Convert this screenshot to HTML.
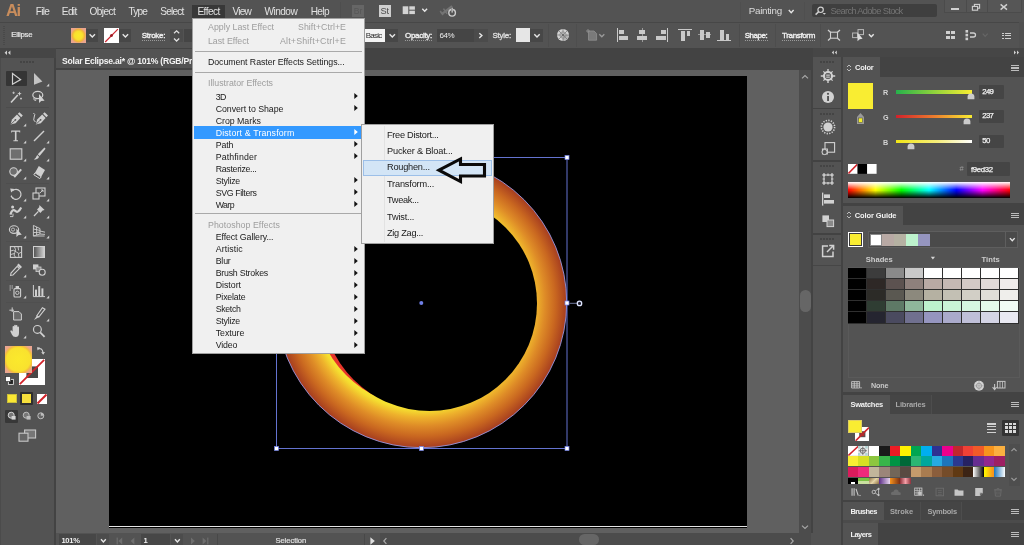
<!DOCTYPE html>
<html lang="en"><head><meta charset="utf-8"><title>Solar Eclipse.ai - Adobe Illustrator</title>
<style>
html,body{margin:0;padding:0;}
body{width:1024px;height:545px;overflow:hidden;background:#535353;position:relative;font-family:"Liberation Sans",sans-serif;}
#app{position:absolute;left:0;top:0;width:1024px;height:545px;overflow:hidden;will-change:transform;-webkit-font-smoothing:antialiased;}
#app div,#app span,#app svg{position:absolute;display:block;box-sizing:border-box;}
#app span{white-space:nowrap;}
</style></head><body><div id="app">
<div style="left:0px;top:0px;width:1024px;height:22px;background:#535353;"></div>
<div style="left:0px;top:22px;width:1024px;height:26px;background:#535353;border-top:1px solid #474747;"></div>
<div style="left:0px;top:48px;width:56px;height:497px;background:#535353;"></div>
<div style="left:0px;top:48px;width:56px;height:9.6px;background:#464646;"></div>
<div style="left:0px;top:57.6px;width:1.2px;height:488px;background:#4b4b4b;"></div>
<div style="left:53.6px;top:57.6px;width:2.2px;height:488px;background:#434343;"></div>
<div style="left:56px;top:48px;width:755px;height:22px;background:#434343;"></div>
<div style="left:55.6px;top:49.2px;width:250px;height:19.2px;background:#535353;"></div>
<div style="left:56px;top:70.3px;width:743px;height:462.7px;background:#606060;"></div>
<div style="left:108.8px;top:76px;width:637.8px;height:451.6px;background:#000;"></div>
<div style="left:108.8px;top:525.9px;width:637.8px;height:1.2px;background:#e4e4e4;"></div>
<div style="left:799px;top:70.3px;width:12px;height:462.7px;background:#4c4c4c;"></div>
<div style="left:811px;top:48px;width:1.8px;height:497px;background:#434343;"></div>
<div style="left:56px;top:533px;width:758px;height:12px;background:#535353;"></div>
<div style="left:812.8px;top:48px;width:211.2px;height:9px;background:#464646;"></div>
<div style="left:812.8px;top:57px;width:28.2px;height:488px;background:#535353;"></div>
<div style="left:841px;top:57px;width:2.4px;height:488px;background:#434343;"></div>
<div style="left:843.4px;top:57px;width:180.6px;height:488px;background:#535353;"></div>
<span style="left:6.0px;top:-0.25px;font-size:16.5px;line-height:20.5px;color:#c98d5c;font-weight:bold;letter-spacing:-1.450px;">Ai</span>
<div style="left:192px;top:4.8px;width:33px;height:13.2px;background:#383838;"></div>
<span style="left:35.7px;top:4.55px;font-size:10.1px;line-height:14.1px;color:#e2e2e2;letter-spacing:-0.668px;">File</span>
<span style="left:61.8px;top:4.55px;font-size:10.1px;line-height:14.1px;color:#e2e2e2;letter-spacing:-0.651px;">Edit</span>
<span style="left:89.4px;top:4.55px;font-size:10.1px;line-height:14.1px;color:#e2e2e2;letter-spacing:-0.565px;">Object</span>
<span style="left:128.5px;top:4.55px;font-size:10.1px;line-height:14.1px;color:#e2e2e2;letter-spacing:-0.799px;">Type</span>
<span style="left:160.3px;top:4.55px;font-size:10.1px;line-height:14.1px;color:#e2e2e2;letter-spacing:-0.795px;">Select</span>
<span style="left:197.4px;top:4.55px;font-size:10.1px;line-height:14.1px;color:#e2e2e2;letter-spacing:-0.540px;">Effect</span>
<span style="left:232.6px;top:4.55px;font-size:10.1px;line-height:14.1px;color:#e2e2e2;letter-spacing:-0.827px;">View</span>
<span style="left:264.5px;top:4.55px;font-size:10.1px;line-height:14.1px;color:#e2e2e2;letter-spacing:-0.537px;">Window</span>
<span style="left:310.7px;top:4.55px;font-size:10.1px;line-height:14.1px;color:#e2e2e2;letter-spacing:-0.618px;">Help</span>
<div style="left:340px;top:2px;width:1px;height:18px;background:#4e4e4e;"></div>
<div style="left:351.9px;top:5.1px;width:11.8px;height:11.8px;background:#666;"></div>
<span style="left:353.8px;top:5.10px;font-size:8.6px;line-height:12.6px;color:#575757;letter-spacing:-0.100px;">Br</span>
<div style="left:378.6px;top:5.1px;width:12px;height:11.8px;background:#cfcfcf;"></div>
<span style="left:380.6px;top:4.80px;font-size:9.2px;line-height:13.2px;color:#4a4a4a;letter-spacing:-0.246px;">St</span>
<svg style="left:402px;top:5px;" width="15" height="11" viewBox="0 0 15 11"><rect x="0.7" y="1.3" width="5.6" height="7.8" fill="#d4d4d4"/><rect x="7.3" y="1.3" width="5.6" height="3.4" fill="#d4d4d4"/><rect x="7.3" y="5.7" width="5.6" height="3.4" fill="#d4d4d4"/></svg>
<svg style="left:418px;top:4px;" width="12" height="12" viewBox="0 0 12 12"><polyline points="4.30,4.70 6.70,7.30 9.10,4.70" fill="none" stroke="#e6e6e6" stroke-width="1.4"/></svg>
<svg style="left:438px;top:2px;" width="20" height="17" viewBox="0 0 20 17"><path d="M2.6 11.4 L13.4 3.2 L15.2 5.6 L5 12.6 Z" fill="#747474"/><path d="M5.4 6.6 L9.2 11.8 M2.2 9 L5 13" stroke="#747474" stroke-width="1.6"/><circle cx="14.1" cy="10.8" r="3.3" fill="#535353" stroke="#cdcdcd" stroke-width="1.4"/><rect x="13.1" y="5.6" width="2" height="5.2" fill="#535353"/><rect x="13.5" y="5.8" width="1.3" height="4.8" fill="#cdcdcd"/></svg>
<div style="left:739.6px;top:2px;width:1px;height:18px;background:#4f4f4f;"></div>
<span style="left:748.8px;top:3.90px;font-size:9.8px;line-height:13.8px;color:#dcdcdc;letter-spacing:-0.302px;">Painting</span>
<svg style="left:785px;top:5px;" width="12" height="12" viewBox="0 0 12 12"><polyline points="3.80,5.00 6.20,7.60 8.60,5.00" fill="none" stroke="#e6e6e6" stroke-width="1.4"/></svg>
<div style="left:804px;top:2px;width:1px;height:18px;background:#4f4f4f;"></div>
<div style="left:812.2px;top:3.9px;width:125px;height:13.4px;background:#3f3f3f;border-radius:2px;"></div>
<svg style="left:814px;top:5px;" width="14" height="12" viewBox="0 0 14 12"><circle cx="6.6" cy="4.8" r="2.7" fill="none" stroke="#d0d0d0" stroke-width="1.2"/><path d="M4.6 6.8 L1.6 9.6" stroke="#d0d0d0" stroke-width="1.5"/><path d="M8.6 8 L12 8 L10.3 9.8 Z" fill="#d0d0d0"/></svg>
<span style="left:830.6px;top:4.55px;font-size:9.3px;line-height:13.3px;color:#747474;letter-spacing:-0.682px;">Search Adobe Stock</span>
<div style="left:944px;top:0px;width:78px;height:13px;background:#565656;border:1px solid #4b4b4b;border-top:none;"></div>
<div style="left:966px;top:0px;width:1px;height:12px;background:#4b4b4b;"></div>
<div style="left:987px;top:0px;width:1px;height:12px;background:#4b4b4b;"></div>
<div style="left:951px;top:8.4px;width:7.6px;height:1.5px;background:#d0d0d0;"></div>
<svg style="left:970px;top:2px;" width="12" height="10" viewBox="0 0 12 10"><rect x="4.4" y="2.4" width="5.2" height="3.8" fill="none" stroke="#d0d0d0" stroke-width="1.1"/><rect x="2.4" y="4.4" width="5.2" height="3.8" fill="#565656" stroke="#d0d0d0" stroke-width="1.1"/></svg>
<svg style="left:998px;top:2px;" width="12" height="10" viewBox="0 0 12 10"><path d="M2.6 2.4 L9 7.6 M9 2.4 L2.6 7.6" stroke="#d0d0d0" stroke-width="1.4"/></svg>
<div style="left:3px;top:26px;width:2px;height:19px;background:repeating-linear-gradient(180deg,#494949 0,#494949 1px,transparent 1px,transparent 2px);"></div>
<span style="left:11.3px;top:29.30px;font-size:7.8px;line-height:11.8px;color:#e6e6e6;letter-spacing:-0.282px;-webkit-text-stroke:0.2px #e6e6e6;">Ellipse</span>
<div style="left:70.9px;top:27.9px;width:14.9px;height:15.2px;background:radial-gradient(circle at 50% 50%,#fbe92c 0,#f9e02e 38%,#f2b43c 58%,#eba58a 72%,#e9a596 100%);"></div>
<div style="left:85.8px;top:29.4px;width:12.5px;height:12.2px;background:#474747;"></div>
<svg style="left:86px;top:29px;" width="12" height="12" viewBox="0 0 12 12"><polyline points="3.60,5.30 6.30,8.10 9.00,5.30" fill="none" stroke="#e6e6e6" stroke-width="1.4"/></svg>
<svg style="left:103.9px;top:27.9px;" width="15.1" height="15.2" viewBox="0 0 15.1 15.2"><rect width="15.1" height="15.2" fill="#fff"/><path d="M1.2 14 L13.9 1.2" stroke="#cc2630" stroke-width="1.2"/><circle cx="7.5" cy="7.6" r="1.5" fill="#9c1c24"/></svg>
<div style="left:119px;top:29.4px;width:12.2px;height:12.2px;background:#474747;"></div>
<svg style="left:119px;top:29px;" width="12" height="12" viewBox="0 0 12 12"><polyline points="3.70,5.30 6.40,8.10 9.10,5.30" fill="none" stroke="#e6e6e6" stroke-width="1.4"/></svg>
<span style="left:141.7px;top:29.90px;font-size:8.0px;line-height:12.0px;color:#f0f0f0;letter-spacing:-0.249px;-webkit-text-stroke:0.35px #f0f0f0;">Stroke:</span>
<div style="left:141.5px;top:39.6px;width:24px;height:1px;background:repeating-linear-gradient(90deg,#9a9a9a 0,#9a9a9a 1px,transparent 1px,transparent 2px);"></div>
<div style="left:170px;top:28.6px;width:13.4px;height:13.6px;background:#4c4c4c;"></div>
<svg style="left:170px;top:28px;" width="14" height="15" viewBox="0 0 14 15"><polyline points="4,5.2 6.6,2.8 9.2,5.2" fill="none" stroke="#e0e0e0" stroke-width="1.3"/><polyline points="4,10.6 6.6,13 9.2,10.6" fill="none" stroke="#e0e0e0" stroke-width="1.3"/></svg>
<div style="left:184px;top:29px;width:60px;height:12.6px;background:#454545;"></div>
<div style="left:340px;top:29px;width:45px;height:13.2px;background:#f4f4f4;"></div>
<span style="left:365.7px;top:29.90px;font-size:8.0px;line-height:12.0px;color:#2a2a2a;letter-spacing:-0.752px;">Basic</span>
<div style="left:385px;top:29.4px;width:13.4px;height:12.2px;background:#474747;"></div>
<svg style="left:386px;top:29px;" width="12" height="12" viewBox="0 0 12 12"><polyline points="3.60,5.30 6.30,8.10 9.00,5.30" fill="none" stroke="#e6e6e6" stroke-width="1.4"/></svg>
<span style="left:405px;top:29.90px;font-size:8.0px;line-height:12.0px;color:#f0f0f0;letter-spacing:-0.293px;-webkit-text-stroke:0.35px #f0f0f0;">Opacity:</span>
<div style="left:405px;top:39.6px;width:27px;height:1px;background:repeating-linear-gradient(90deg,#9a9a9a 0,#9a9a9a 1px,transparent 1px,transparent 2px);"></div>
<div style="left:437.2px;top:29px;width:36.4px;height:12.6px;background:#454545;"></div>
<span style="left:439.6px;top:29.90px;font-size:8.0px;line-height:12.0px;color:#ececec;letter-spacing:-0.470px;">64%</span>
<div style="left:473.6px;top:29px;width:14.2px;height:12.6px;background:#4b4b4b;"></div>
<svg style="left:474px;top:29px;" width="12" height="12" viewBox="0 0 12 12"><polyline points="5.30,4.20 7.90,6.60 5.30,9.00" fill="none" stroke="#e6e6e6" stroke-width="1.4"/></svg>
<span style="left:492.5px;top:29.90px;font-size:8.0px;line-height:12.0px;color:#dcdcdc;letter-spacing:-0.251px;-webkit-text-stroke:0.35px #dcdcdc;">Style:</span>
<div style="left:515.6px;top:28.3px;width:14.6px;height:14.2px;background:#e6e6e6;"></div>
<div style="left:530.2px;top:29.4px;width:12.8px;height:12.2px;background:#474747;"></div>
<svg style="left:531px;top:29px;" width="12" height="12" viewBox="0 0 12 12"><polyline points="3.30,5.30 6.00,8.10 8.70,5.30" fill="none" stroke="#e6e6e6" stroke-width="1.4"/></svg>
<div style="left:548px;top:24px;width:1px;height:23px;background:#4e4e4e;"></div>
<svg style="left:556px;top:28px;" width="14" height="14" viewBox="0 0 14 14"><circle cx="7" cy="7" r="6" fill="#d4d4d4"/><path d="M7 7 L13 7 A6 6 0 0 1 7 13 Z" fill="#b4b4b4"/><path d="M7 1 V13 M1 7 H13 M2.8 2.8 L11.2 11.2 M11.2 2.8 L2.8 11.2" stroke="#6e6e6e" stroke-width="0.7"/><circle cx="7" cy="7" r="3.2" fill="none" stroke="#8a8a8a" stroke-width="0.8"/><circle cx="7" cy="7" r="1" fill="#666"/></svg>
<div style="left:576px;top:24px;width:1px;height:23px;background:#4e4e4e;"></div>
<svg style="left:585px;top:28px;" width="14" height="14" viewBox="0 0 14 14"><path d="M3.5 3 H9 L11.6 5.6 V12.2 H3.5 Z" fill="#7a7a7a" stroke="#909090" stroke-width="0.8"/><path d="M1 3 H5 M3 1 V5" stroke="#909090" stroke-width="0.9"/></svg>
<svg style="left:595px;top:29px;" width="12" height="12" viewBox="0 0 12 12"><polyline points="4.30,5.20 6.80,7.80 9.30,5.20" fill="none" stroke="#9a9a9a" stroke-width="1.3"/></svg>
<div style="left:617.2px;top:28px;width:1.0px;height:13.5px;background:#c9c9c9;"></div>
<div style="left:619px;top:30.2px;width:5px;height:3.8px;background:#c9c9c9;"></div>
<div style="left:619px;top:35.7px;width:9px;height:4.2px;background:#c9c9c9;"></div>
<div style="left:641.6px;top:28px;width:0.9px;height:13.5px;background:#9a9a9a;"></div>
<div style="left:639px;top:30.2px;width:6.3px;height:3.8px;background:#c9c9c9;"></div>
<div style="left:637px;top:35.7px;width:10px;height:4.2px;background:#c9c9c9;"></div>
<div style="left:667px;top:28px;width:1px;height:13.5px;background:#c9c9c9;"></div>
<div style="left:660.8px;top:30.2px;width:5.2px;height:3.8px;background:#c9c9c9;"></div>
<div style="left:656.3px;top:35.7px;width:9.7px;height:4.2px;background:#c9c9c9;"></div>
<div style="left:678px;top:29.2px;width:13.5px;height:1.0px;background:#c9c9c9;"></div>
<div style="left:680.7px;top:30.8px;width:4.3px;height:9.9px;background:#c9c9c9;"></div>
<div style="left:686.5px;top:30.8px;width:3.9px;height:5.7px;background:#c9c9c9;"></div>
<div style="left:697.8px;top:34.4px;width:13.7px;height:0.9px;background:#9a9a9a;"></div>
<div style="left:699.8px;top:29.9px;width:4.2px;height:10.0px;background:#c9c9c9;"></div>
<div style="left:705.6px;top:31.6px;width:4.2px;height:6.6px;background:#c9c9c9;"></div>
<div style="left:717.3px;top:40.2px;width:13.7px;height:1.0px;background:#c9c9c9;"></div>
<div style="left:719.8px;top:29.9px;width:3.8px;height:9.8px;background:#c9c9c9;"></div>
<div style="left:725.6px;top:34px;width:3.8px;height:5.7px;background:#c9c9c9;"></div>
<div style="left:739px;top:24px;width:1px;height:23px;background:#4c4c4c;"></div>
<span style="left:744.7px;top:29.90px;font-size:8.0px;line-height:12.0px;color:#f0f0f0;letter-spacing:-0.476px;-webkit-text-stroke:0.35px #f0f0f0;">Shape:</span>
<div style="left:744.5px;top:39.6px;width:23px;height:1px;background:repeating-linear-gradient(90deg,#9a9a9a 0,#9a9a9a 1px,transparent 1px,transparent 2px);"></div>
<div style="left:775px;top:24px;width:1px;height:23px;background:#4d4d4d;"></div>
<span style="left:782px;top:29.90px;font-size:8.0px;line-height:12.0px;color:#f0f0f0;letter-spacing:-0.350px;-webkit-text-stroke:0.35px #f0f0f0;">Transform</span>
<div style="left:782px;top:39.6px;width:33px;height:1px;background:repeating-linear-gradient(90deg,#9a9a9a 0,#9a9a9a 1px,transparent 1px,transparent 2px);"></div>
<div style="left:820px;top:24px;width:1px;height:23px;background:#4d4d4d;"></div>
<svg style="left:827px;top:29px;" width="14" height="13" viewBox="0 0 14 13"><rect x="3.5" y="3.2" width="7" height="6" fill="none" stroke="#cfcfcf" stroke-width="1.1"/><path d="M1 1 L3.5 3.2 M13 1 L10.5 3.2 M1 11.5 L3.5 9.2 M13 11.5 L10.5 9.2" stroke="#cfcfcf" stroke-width="1.3"/></svg>
<svg style="left:851px;top:28px;" width="15" height="15" viewBox="0 0 15 15"><rect x="7" y="1.6" width="5.5" height="5" fill="none" stroke="#b8b8b8" stroke-width="1"/><rect x="1.6" y="5" width="5" height="4.6" fill="none" stroke="#b8b8b8" stroke-width="1"/><path d="M6.5 4.5 L6.5 13.2 L8.7 11.2 L11.6 10.8 Z" fill="#dcdcdc"/></svg>
<svg style="left:865px;top:29px;" width="12" height="12" viewBox="0 0 12 12"><polyline points="3.90,5.20 6.30,7.80 8.70,5.20" fill="none" stroke="#e6e6e6" stroke-width="1.4"/></svg>
<div style="left:946.3px;top:30.8px;width:3.6px;height:3.4px;background:#cfcfcf;"></div>
<div style="left:946.3px;top:35.6px;width:3.6px;height:3.4px;background:#cfcfcf;"></div>
<div style="left:951.3px;top:30.8px;width:3.6px;height:3.4px;background:#cfcfcf;"></div>
<div style="left:951.3px;top:35.6px;width:3.6px;height:3.4px;background:#cfcfcf;"></div>
<svg style="left:964px;top:29px;" width="13" height="13" viewBox="0 0 13 13"><rect x="1.5" y="1" width="2.6" height="2.6" fill="#cfcfcf"/><rect x="1.5" y="4.8" width="2.6" height="2.6" fill="#cfcfcf"/><rect x="1.5" y="8.6" width="2.6" height="2.6" fill="#cfcfcf"/><path d="M6 4 H9.3 Q11.5 4 11.5 6 Q11.5 8 9.3 8 H6" fill="none" stroke="#cfcfcf" stroke-width="1.3"/></svg>
<svg style="left:979px;top:29px;" width="12" height="12" viewBox="0 0 12 12"><polyline points="3.70,4.70 6.20,7.30 8.70,4.70" fill="none" stroke="#666" stroke-width="1.2"/></svg>
<div style="left:1002px;top:32.6px;width:1.5px;height:1px;background:#cfcfcf;"></div>
<div style="left:1004.5px;top:32.6px;width:6.5px;height:1px;background:#cfcfcf;"></div>
<div style="left:1002px;top:35.2px;width:1.5px;height:1px;background:#cfcfcf;"></div>
<div style="left:1004.5px;top:35.2px;width:6.5px;height:1px;background:#cfcfcf;"></div>
<div style="left:1002px;top:37.8px;width:1.5px;height:1px;background:#cfcfcf;"></div>
<div style="left:1004.5px;top:37.8px;width:6.5px;height:1px;background:#cfcfcf;"></div>
<div style="left:1019px;top:22px;width:5px;height:26px;background:#505050;"></div>
<svg style="left:4px;top:50px;" width="8" height="6" viewBox="0 0 8 6"><path d="M3 0.6 L0.6 2.8 L3 5 Z M6.4 0.6 L4 2.8 L6.4 5 Z" fill="#d0d0d0"/></svg>
<div style="left:19.8px;top:60.6px;width:14.4px;height:2px;background:repeating-linear-gradient(90deg,#444 0,#444 2px,transparent 2px,transparent 3px);"></div>
<div style="left:5.5px;top:70.7px;width:21px;height:15.8px;background:#353535;border-radius:1px;"></div>
<svg style="left:7.800000000000001px;top:71.0px;overflow:visible" width="16" height="16" viewBox="0 0 16 16"><path d="M4.5 2.5 L4.5 13.2 L12.6 8.6 Z" fill="none" stroke="#d0d0d0" stroke-width="1.2" stroke-linejoin="miter"/></svg>
<svg style="left:31.200000000000003px;top:71.0px;overflow:visible" width="16" height="16" viewBox="0 0 16 16"><path d="M3 2 L3 13.8 L11.4 10.4 Z" fill="#c4c4c4"/><path d="M13.0 15.8 L15.8 15.8 L15.8 13.0 Z" fill="#d0d0d0" transform="translate(2.4,-0.4)"/></svg>
<svg style="left:7.800000000000001px;top:89.0px;overflow:visible" width="16" height="16" viewBox="0 0 16 16"><path d="M3 13.5 L9.8 6" stroke="#d0d0d0" stroke-width="1.6"/><path d="M11.5 2.5 l0.6 1.6 1.6 0.6 -1.6 0.6 -0.6 1.6 -0.6 -1.6 -1.6 -0.6 1.6 -0.6z" fill="#d0d0d0"/><path d="M5.6 2.6 v2.4 M4.4 3.8 h2.4 M13 8.6 v2 M12 9.6 h2" stroke="#d0d0d0" stroke-width="0.8"/></svg>
<svg style="left:31.200000000000003px;top:89.0px;overflow:visible" width="16" height="16" viewBox="0 0 16 16"><ellipse cx="6.8" cy="6" rx="5" ry="3.6" fill="none" stroke="#d0d0d0" stroke-width="1.2"/><path d="M3.5 8.2 q-1.6 2 0.2 3.2 q1.6 0.6 1.2 -1.2" fill="none" stroke="#d0d0d0" stroke-width="1"/><path d="M8 5 L8 14 L10.2 12 L13.6 11.8 Z" fill="#d0d0d0"/></svg>
<div style="left:6px;top:107px;width:43px;height:1px;background:#4c4c4c;"></div>
<svg style="left:7.800000000000001px;top:110.9px;overflow:visible" width="16" height="16" viewBox="0 0 16 16"><path d="M2.6 13.6 L4 8.6 L9 3.6 L12.4 7 L7.6 12.2 Z" fill="#d0d0d0"/><path d="M9.8 2.8 L11.4 1.2 L14.8 4.6 L13.2 6.2 Z" fill="#d0d0d0"/><path d="M3 13.2 L7 9.2" stroke="#535353" stroke-width="0.9"/><circle cx="7.4" cy="8.8" r="0.9" fill="#535353"/><path d="M13.0 15.8 L15.8 15.8 L15.8 13.0 Z" fill="#d0d0d0" transform="translate(2.4,-0.4)"/></svg>
<svg style="left:31.200000000000003px;top:110.9px;overflow:visible" width="16" height="16" viewBox="0 0 16 16"><g transform="translate(2.2,0)"><path d="M2.6 13.6 L4 8.6 L9 3.6 L12.4 7 L7.6 12.2 Z" fill="#d0d0d0"/><path d="M9.8 2.8 L11.4 1.2 L14.8 4.6 L13.2 6.2 Z" fill="#d0d0d0"/><path d="M3 13.2 L7 9.2" stroke="#535353" stroke-width="0.9"/><circle cx="7.4" cy="8.8" r="0.9" fill="#535353"/></g><path d="M2.4 2 q2.4 1 0.8 4 q-1.6 3.4 1.2 5" fill="none" stroke="#d0d0d0" stroke-width="1"/></svg>
<svg style="left:7.800000000000001px;top:128.2px;overflow:visible" width="16" height="16" viewBox="0 0 16 16"><path d="M3.2 2.6 H12.2 V4.6 H11.4 V3.8 H8.5 V12.2 H10 V13.2 H5.4 V12.2 H6.9 V3.8 H4 V4.6 H3.2 Z" fill="#d0d0d0"/><path d="M13.0 15.8 L15.8 15.8 L15.8 13.0 Z" fill="#d0d0d0" transform="translate(2.4,-0.4)"/></svg>
<svg style="left:31.200000000000003px;top:128.2px;overflow:visible" width="16" height="16" viewBox="0 0 16 16"><path d="M3 13 L13 3" stroke="#d0d0d0" stroke-width="1.4"/><path d="M13.0 15.8 L15.8 15.8 L15.8 13.0 Z" fill="#d0d0d0" transform="translate(2.4,-0.4)"/></svg>
<svg style="left:7.800000000000001px;top:146.0px;overflow:visible" width="16" height="16" viewBox="0 0 16 16"><rect x="2.2" y="2.8" width="11.6" height="10.4" fill="#6e6e6e" stroke="#d0d0d0" stroke-width="1.1"/><path d="M13.0 15.8 L15.8 15.8 L15.8 13.0 Z" fill="#d0d0d0" transform="translate(2.4,-0.4)"/></svg>
<svg style="left:31.200000000000003px;top:146.0px;overflow:visible" width="16" height="16" viewBox="0 0 16 16"><path d="M13.4 1.6 L14.6 2.8 L8.6 10 L6.8 8.2 Z" fill="#d0d0d0"/><path d="M6.2 9 L8 10.8 Q7.4 13.6 2.8 13.6 Q5 12 6.2 9 Z" fill="#d0d0d0"/><path d="M13.0 15.8 L15.8 15.8 L15.8 13.0 Z" fill="#d0d0d0" transform="translate(2.4,-0.4)"/></svg>
<svg style="left:7.800000000000001px;top:164.3px;overflow:visible" width="16" height="16" viewBox="0 0 16 16"><circle cx="5.6" cy="7.6" r="3.8" fill="#6e6e6e" stroke="#d0d0d0" stroke-width="1.1"/><path d="M6.2 13.2 L13.2 5.4" stroke="#d0d0d0" stroke-width="2"/><path d="M13.0 15.8 L15.8 15.8 L15.8 13.0 Z" fill="#d0d0d0" transform="translate(2.4,-0.4)"/></svg>
<svg style="left:31.200000000000003px;top:164.3px;overflow:visible" width="16" height="16" viewBox="0 0 16 16"><path d="M7.8 2 L14 6 L10.2 12.8 L4 8.8 Z" fill="#d0d0d0"/><path d="M4 8.8 L10.2 12.8 L8.8 14.6 L2.8 10.8 Z" fill="none" stroke="#d0d0d0" stroke-width="1"/><path d="M13.0 15.8 L15.8 15.8 L15.8 13.0 Z" fill="#d0d0d0" transform="translate(2.4,-0.4)"/></svg>
<div style="left:6px;top:182.9px;width:43px;height:1px;background:#4e4e4e;"></div>
<div style="left:6px;top:241.3px;width:43px;height:1px;background:#4f4f4f;"></div>
<div style="left:6px;top:280.3px;width:43px;height:1px;background:#4f4f4f;"></div>
<div style="left:6px;top:302px;width:43px;height:1px;background:#4f4f4f;"></div>
<svg style="left:7.800000000000001px;top:185.7px;overflow:visible" width="16" height="16" viewBox="0 0 16 16"><path d="M4.4 4.8 A5 5 0 1 1 3.2 9.8" fill="none" stroke="#d0d0d0" stroke-width="1.2" stroke-dasharray="8 0"/><path d="M3.2 9.8 A5 5 0 0 0 6 12.6" fill="none" stroke="#d0d0d0" stroke-width="1.2" stroke-dasharray="1.2 1"/><path d="M2.2 2.4 L6.6 3 L3.2 6.6 Z" fill="#d0d0d0"/><path d="M13.0 15.8 L15.8 15.8 L15.8 13.0 Z" fill="#d0d0d0" transform="translate(2.4,-0.4)"/></svg>
<svg style="left:31.200000000000003px;top:185.7px;overflow:visible" width="16" height="16" viewBox="0 0 16 16"><rect x="5" y="2" width="9" height="8" fill="none" stroke="#d0d0d0" stroke-width="1.1"/><rect x="2" y="7" width="6" height="6" fill="#535353" stroke="#d0d0d0" stroke-width="1.1"/><path d="M9 7 L12 4 M12 4 h-2 M12 4 v2" stroke="#d0d0d0" stroke-width="0.9" fill="none"/><path d="M13.0 15.8 L15.8 15.8 L15.8 13.0 Z" fill="#d0d0d0" transform="translate(2.4,-0.4)"/></svg>
<svg style="left:7.800000000000001px;top:203.2px;overflow:visible" width="16" height="16" viewBox="0 0 16 16"><path d="M2.4 11.6 q2 -6.6 5 -3.6 q2.6 2.6 5.8 -3.6" fill="none" stroke="#d0d0d0" stroke-width="2.2"/><circle cx="4.6" cy="4" r="1.5" fill="#d0d0d0"/><path d="M2 13.6 h3 v-3" fill="none" stroke="#d0d0d0" stroke-width="0.9"/><path d="M13.0 15.8 L15.8 15.8 L15.8 13.0 Z" fill="#d0d0d0" transform="translate(2.4,-0.4)"/></svg>
<svg style="left:31.200000000000003px;top:203.2px;overflow:visible" width="16" height="16" viewBox="0 0 16 16"><path d="M8.4 2 L13.6 7 L11.6 7.6 L9.4 10 L6 6.4 L8.2 4.2 Z" fill="#d0d0d0"/><path d="M7.4 8.4 L3 13" stroke="#d0d0d0" stroke-width="1.3"/><path d="M13.0 15.8 L15.8 15.8 L15.8 13.0 Z" fill="#d0d0d0" transform="translate(2.4,-0.4)"/></svg>
<svg style="left:7.800000000000001px;top:222.7px;overflow:visible" width="16" height="16" viewBox="0 0 16 16"><ellipse cx="6" cy="6.6" rx="4.6" ry="3.8" fill="none" stroke="#d0d0d0" stroke-width="1.1"/><circle cx="5" cy="6.6" r="1.6" fill="none" stroke="#d0d0d0" stroke-width="0.8"/><path d="M8.4 5.4 L8.4 14 L10.6 12 L13.8 11.8 Z" fill="#d0d0d0"/><path d="M13.0 15.8 L15.8 15.8 L15.8 13.0 Z" fill="#d0d0d0" transform="translate(2.4,-0.4)"/></svg>
<svg style="left:31.200000000000003px;top:222.7px;overflow:visible" width="16" height="16" viewBox="0 0 16 16"><path d="M2.4 2.4 L2.4 13 L13.6 13 M2.4 2.4 L9 5.6 L9 11 L2.4 13 M5.6 4 L5.6 12 M2.4 6 L9 7.4 M2.4 9.6 L9 9.2 M9 8 L14 9.2 M9 11 L14 11.4" fill="none" stroke="#d0d0d0" stroke-width="0.9"/><path d="M13.0 15.8 L15.8 15.8 L15.8 13.0 Z" fill="#d0d0d0" transform="translate(2.4,-0.4)"/></svg>
<svg style="left:7.800000000000001px;top:244.0px;overflow:visible" width="16" height="16" viewBox="0 0 16 16"><rect x="2.4" y="2.6" width="11.2" height="10.8" fill="none" stroke="#d0d0d0" stroke-width="1.1"/><path d="M2.4 7 Q6 5 8.4 8 T13.6 8 M6.4 2.6 Q8.6 6 6.8 8.6 T7.6 13.4 M2.4 10.6 L6 9.6 M10 2.6 L10.6 6.4 M10.4 9.6 L11 13.4" fill="none" stroke="#d0d0d0" stroke-width="0.9"/></svg>
<div style="left:32.8px;top:246.4px;width:12.6px;height:11.4px;border:1px solid #d0d0d0;background:linear-gradient(90deg,#555,#cfcfcf);"></div>
<svg style="left:7.800000000000001px;top:261.6px;overflow:visible" width="16" height="16" viewBox="0 0 16 16"><path d="M10.6 1.6 L14 5 L12.4 6.6 L9 3.2 Z" fill="#d0d0d0"/><path d="M9.2 4.4 L11.4 6.6 L5 13 L2.6 13.4 L3 11 Z" fill="none" stroke="#d0d0d0" stroke-width="1.1"/><path d="M13.0 15.8 L15.8 15.8 L15.8 13.0 Z" fill="#d0d0d0" transform="translate(2.4,-0.4)"/></svg>
<svg style="left:31.200000000000003px;top:261.6px;overflow:visible" width="16" height="16" viewBox="0 0 16 16"><rect x="2" y="2.4" width="5.4" height="5" fill="#d0d0d0"/><rect x="5" y="5" width="5" height="4.6" fill="#8a8a8a" stroke="#d0d0d0" stroke-width="0.8"/><circle cx="11.2" cy="10.2" r="3" fill="#535353" stroke="#d0d0d0" stroke-width="1.1"/></svg>
<svg style="left:7.800000000000001px;top:283.0px;overflow:visible" width="16" height="16" viewBox="0 0 16 16"><rect x="6" y="5.6" width="6.6" height="8.4" rx="1" fill="none" stroke="#d0d0d0" stroke-width="1.1"/><rect x="7.6" y="3" width="3.4" height="2.6" fill="#d0d0d0"/><circle cx="9.3" cy="9.8" r="1.7" fill="none" stroke="#d0d0d0" stroke-width="0.9"/><path d="M1.6 3 h1.2 M3.6 3 h1.2 M1.6 5 h1.2 M3.6 5 h1.2 M1.6 7 h1.2" stroke="#d0d0d0" stroke-width="1.1"/><path d="M13.0 15.8 L15.8 15.8 L15.8 13.0 Z" fill="#d0d0d0" transform="translate(2.4,-0.4)"/></svg>
<svg style="left:31.200000000000003px;top:283.0px;overflow:visible" width="16" height="16" viewBox="0 0 16 16"><path d="M2.4 2 V13.6 H14" fill="none" stroke="#d0d0d0" stroke-width="1"/><rect x="4" y="6.6" width="2" height="6.4" fill="#d0d0d0"/><rect x="7.2" y="3" width="2" height="10" fill="#d0d0d0"/><rect x="10.4" y="5.4" width="2" height="7.6" fill="#d0d0d0"/><path d="M13.0 15.8 L15.8 15.8 L15.8 13.0 Z" fill="#d0d0d0" transform="translate(2.4,-0.4)"/></svg>
<svg style="left:7.800000000000001px;top:305.5px;overflow:visible" width="16" height="16" viewBox="0 0 16 16"><path d="M1.4 4.2 H6 M4.2 1.4 V6" stroke="#d0d0d0" stroke-width="1"/><path d="M5.6 5.6 H11 L13.4 8 V14 H5.6 Z" fill="#6a6a6a" stroke="#d0d0d0" stroke-width="1"/></svg>
<svg style="left:31.200000000000003px;top:305.5px;overflow:visible" width="16" height="16" viewBox="0 0 16 16"><path d="M11.4 1.8 L14 3.2 L7.8 11 L5.8 9.8 Z" fill="none" stroke="#d0d0d0" stroke-width="1.1"/><path d="M5.6 10 L7.6 11.2 L3 14 Z" fill="#d0d0d0"/><path d="M13.0 15.8 L15.8 15.8 L15.8 13.0 Z" fill="#d0d0d0" transform="translate(2.4,-0.4)"/></svg>
<svg style="left:7.800000000000001px;top:322.6px;overflow:visible" width="16" height="16" viewBox="0 0 16 16"><path d="M4.6 8.6 V3.8 q0 -0.9 0.8 -0.9 t0.8 0.9 V7 V2.6 q0 -0.9 0.8 -0.9 t0.8 0.9 V7 V3 q0 -0.9 0.8 -0.9 t0.8 0.9 V7.4 V4.4 q0 -0.8 0.8 -0.8 t0.8 0.8 V10 q0 4 -3.4 4 q-2.6 0 -3.6 -2.2 L2.4 8.6 q-0.4 -1 0.4 -1.2 q0.8 -0.2 1.2 0.6 Z" fill="#d0d0d0"/><path d="M13.0 15.8 L15.8 15.8 L15.8 13.0 Z" fill="#d0d0d0" transform="translate(2.4,-0.4)"/></svg>
<svg style="left:31.200000000000003px;top:322.6px;overflow:visible" width="16" height="16" viewBox="0 0 16 16"><circle cx="6.4" cy="6.4" r="3.9" fill="none" stroke="#d0d0d0" stroke-width="1.2"/><path d="M9.2 9.4 L13.6 13.8" stroke="#d0d0d0" stroke-width="1.8"/></svg>
<svg style="left:19px;top:359.3px;" width="26" height="26" viewBox="0 0 26 26"><rect width="26" height="26" fill="#fff"/><rect x="7.4" y="7.4" width="11.6" height="11.6" fill="#474747"/><path d="M0.8 25.2 L25.2 0.8" stroke="#d2232a" stroke-width="1.8"/></svg>
<div style="left:4.6px;top:345.6px;width:27.1px;height:27px;background:radial-gradient(circle at 50% 50%,#fbe92c 0,#f9e22e 62%,#f3bd3e 72%,#eba68a 82%,#e9a596 100%);"></div>
<svg style="left:36px;top:346px;" width="10" height="10" viewBox="0 0 10 10"><path d="M2 3 q4 -1.6 5 3.4" fill="none" stroke="#d0d0d0" stroke-width="1.1"/><path d="M1 1.2 L4 1.4 L1.6 4.4 Z M9 6 L7.2 8.8 L5.2 6.2 Z" fill="#d0d0d0"/></svg>
<svg style="left:5px;top:376px;" width="9" height="9" viewBox="0 0 9 9"><rect x="3.4" y="3.4" width="5" height="5" fill="#222" stroke="#ddd" stroke-width="0.9"/><rect x="0.6" y="0.6" width="5" height="5" fill="#fff" stroke="#333" stroke-width="0.7"/></svg>
<div style="left:7px;top:393.7px;width:9.6px;height:9.4px;background:#fae733;border:1px solid #cbbf3a;"></div>
<div style="left:20px;top:391.6px;width:12.8px;height:13.4px;background:#2e2e2e;border-radius:1px;"></div>
<div style="left:22.2px;top:393.7px;width:9.2px;height:9.4px;background:#f6df3c;"></div>
<svg style="left:37px;top:393.5px;" width="10" height="10" viewBox="0 0 10 10"><rect width="10" height="10" fill="#fff"/><path d="M0.5 9.5 L9.5 0.5" stroke="#d2232a" stroke-width="2"/></svg>
<div style="left:5.3px;top:410px;width:12.8px;height:12.8px;background:#383838;border-radius:1px;"></div>
<svg style="left:6.800000000000001px;top:411.4px;" width="10" height="10" viewBox="0 0 10 10"><circle cx="4.2" cy="4.2" r="3" fill="#777" stroke="#d4d4d4" stroke-width="1"/><rect x="4.6" y="5" width="4" height="3.6" fill="#d4d4d4"/></svg>
<svg style="left:22px;top:411.4px;" width="10" height="10" viewBox="0 0 10 10"><circle cx="4.2" cy="4.2" r="3" fill="#777" stroke="#bdbdbd" stroke-width="1"/><rect x="4.6" y="5" width="4" height="3.6" fill="#bdbdbd"/></svg>
<svg style="left:36px;top:411px;" width="10" height="10" viewBox="0 0 10 10"><circle cx="4.8" cy="4.8" r="3" fill="#666" stroke="#bdbdbd" stroke-width="1"/><path d="M4.8 4.8 L7.8 4.8 A3 3 0 0 0 4.8 1.8 Z" fill="#bdbdbd"/></svg>
<svg style="left:18px;top:429px;" width="19" height="14" viewBox="0 0 19 14"><rect x="6.6" y="1" width="11" height="8" fill="#777" stroke="#c6c6c6" stroke-width="1.1"/><rect x="1" y="4.2" width="9" height="8" fill="#666" stroke="#c6c6c6" stroke-width="1.1"/></svg>
<svg style="left:831px;top:50.4px;" width="7" height="5" viewBox="0 0 7 5"><path d="M2.8 0.6 L0.8 2.5 L2.8 4.4 Z M5.8 0.6 L3.8 2.5 L5.8 4.4 Z" fill="#d4d4d4"/></svg>
<svg style="left:1013px;top:50.4px;" width="7" height="5" viewBox="0 0 7 5"><path d="M1 0.6 L3 2.5 L1 4.4 Z M4 0.6 L6 2.5 L4 4.4 Z" fill="#d4d4d4"/></svg>
<div style="left:812.8px;top:107.8px;width:28.2px;height:1.5px;background:#424242;"></div>
<div style="left:812.8px;top:160.2px;width:28.2px;height:1.5px;background:#424242;"></div>
<div style="left:812.8px;top:233px;width:28.2px;height:1.5px;background:#424242;"></div>
<div style="left:812.8px;top:264.6px;width:28.2px;height:1.4px;background:#464646;"></div>
<div style="left:820px;top:60.6px;width:14.4px;height:2px;background:repeating-linear-gradient(90deg,#444 0,#444 2px,transparent 2px,transparent 3px);"></div>
<div style="left:820px;top:112.6px;width:14.4px;height:2px;background:repeating-linear-gradient(90deg,#444 0,#444 2px,transparent 2px,transparent 3px);"></div>
<div style="left:820px;top:164.6px;width:14.4px;height:2px;background:repeating-linear-gradient(90deg,#444 0,#444 2px,transparent 2px,transparent 3px);"></div>
<div style="left:820px;top:237.6px;width:14.4px;height:2px;background:repeating-linear-gradient(90deg,#444 0,#444 2px,transparent 2px,transparent 3px);"></div>
<svg style="left:820.0px;top:67.6px;overflow:visible;" width="16" height="16" viewBox="0 0 16 16"><circle cx="8" cy="8" r="4" fill="none" stroke="#d2d2d2" stroke-width="2.2"/><path d="M0.8 8 H15.2 M8 1 V15" stroke="#d2d2d2" stroke-width="1.4"/><path d="M3.4 3.4 L12.6 12.6 M12.6 3.4 L3.4 12.6" stroke="#d2d2d2" stroke-width="1.3"/><circle cx="8" cy="8" r="2.9" fill="#5a5a5a"/><rect x="6.2" y="6.6" width="3.6" height="1.1" fill="#d2d2d2"/><rect x="6.2" y="8.6" width="3.6" height="1.1" fill="#d2d2d2"/></svg>
<svg style="left:820.0px;top:88.6px;overflow:visible;" width="16" height="16" viewBox="0 0 16 16"><circle cx="8" cy="8" r="6" fill="#d2d2d2"/><rect x="7.1" y="7" width="1.9" height="5" fill="#535353"/><circle cx="8" cy="4.8" r="1.1" fill="#535353"/></svg>
<svg style="left:820.0px;top:119.0px;overflow:visible;" width="16" height="16" viewBox="0 0 16 16"><circle cx="8" cy="8" r="4.6" fill="#d2d2d2"/><circle cx="8" cy="8" r="6.6" fill="none" stroke="#d2d2d2" stroke-width="1.6" stroke-dasharray="1.3 1.3"/></svg>
<svg style="left:820.0px;top:140.6px;overflow:visible;" width="16" height="16" viewBox="0 0 16 16"><rect x="5" y="1.6" width="9.6" height="9.6" fill="none" stroke="#d2d2d2" stroke-width="1.1"/><rect x="2.4" y="8" width="5" height="5" fill="#535353" stroke="#d2d2d2" stroke-width="1"/><circle cx="4.6" cy="11" r="2.6" fill="#535353" stroke="#d2d2d2" stroke-width="1"/></svg>
<svg style="left:820.0px;top:170.5px;overflow:visible;" width="16" height="16" viewBox="0 0 16 16"><rect x="4" y="4" width="8" height="8" fill="none" stroke="#d2d2d2" stroke-width="1.1"/><path d="M2 4 h3.4 M4 2 v3.4 M10.6 4 h3.4 M12 2 v3.4 M2 12 h3.4 M4 10.6 v3.4 M10.6 12 h3.4 M12 10.6 v3.4 M8 2.6 v2.4 M8 11 v2.4 M2.6 8 h2.4 M11 8 h2.4" stroke="#d2d2d2" stroke-width="1.2"/></svg>
<svg style="left:820.0px;top:191.4px;overflow:visible;" width="16" height="16" viewBox="0 0 16 16"><rect x="2" y="1.6" width="1.3" height="13" fill="#d2d2d2"/><rect x="4" y="3.4" width="6" height="3.6" fill="#d2d2d2"/><rect x="4" y="9" width="10" height="3.6" fill="#d2d2d2"/></svg>
<svg style="left:820.0px;top:212.6px;overflow:visible;" width="16" height="16" viewBox="0 0 16 16"><rect x="2.4" y="2.4" width="6.6" height="6.6" fill="#d2d2d2"/><rect x="7" y="7" width="6.6" height="6.6" fill="#8a8a8a" stroke="#d2d2d2" stroke-width="1"/></svg>
<svg style="left:820.0px;top:243.0px;overflow:visible;" width="16" height="16" viewBox="0 0 16 16"><path d="M8 3 H2.6 V13.6 H13 V8.4" fill="none" stroke="#d2d2d2" stroke-width="1.5"/><path d="M7 9 L13 3 M9.2 2.4 H13.6 V6.8" fill="none" stroke="#d2d2d2" stroke-width="1.5"/></svg>
<div style="left:843.4px;top:57px;width:180.60000000000002px;height:20.4px;background:#434343;"></div>
<div style="left:843.4px;top:57px;width:37px;height:21.4px;background:#535353;"></div>
<svg style="left:846px;top:63.8px;" width="6" height="8" viewBox="0 0 6 8"><polyline points="1,3 3,1 5,3" fill="none" stroke="#bdbdbd" stroke-width="1"/><polyline points="1,5 3,7 5,5" fill="none" stroke="#bdbdbd" stroke-width="1"/></svg>
<span style="left:855px;top:62.15px;font-size:7.5px;line-height:11.5px;color:#f2f2f2;font-weight:bold;letter-spacing:-0.216px;">Color</span>
<div style="left:1011px;top:65.2px;width:8px;height:1.2px;background:#bcbcbc;"></div>
<div style="left:1011px;top:67.4px;width:8px;height:1.2px;background:#bcbcbc;"></div>
<div style="left:1011px;top:69.60000000000001px;width:8px;height:1.2px;background:#bcbcbc;"></div>
<div style="left:847.7px;top:83px;width:25.6px;height:25.8px;background:#f9ed32;"></div>
<svg style="left:856px;top:112px;" width="9" height="13" viewBox="0 0 9 13"><path d="M1 5 L4.5 1 L8 5 V12 H1 Z" fill="#9a9a9a"/><rect x="2.4" y="6" width="4.2" height="4.6" fill="#f4ee2a" stroke="#555" stroke-width="0.6"/></svg>
<span style="left:882.9px;top:87.10px;font-size:7.2px;line-height:11.2px;color:#d4d4d4;font-weight:bold;">R</span>
<div style="left:896px;top:90.30000000000001px;width:76.2px;height:3.4px;background:linear-gradient(90deg,#26b14c,#8fd23c 50%,#f9ed32);"></div>
<svg style="left:967.4px;top:93.30000000000001px;" width="8" height="7" viewBox="0 0 8 7"><path d="M0.6 6.2 V3.6 Q0.8 0.6 4 0.5 Q7.2 0.6 7.4 3.6 V6.2 Z" fill="#cbcbcb"/></svg>
<div style="left:979.4px;top:85.4px;width:24.4px;height:13.2px;background:#454545;border-radius:1px;"></div>
<span style="left:982.3px;top:85.50px;font-size:7.8px;line-height:11.8px;color:#f2f2f2;letter-spacing:-0.704px;-webkit-text-stroke:0.25px #f2f2f2;">249</span>
<span style="left:882.9px;top:111.90px;font-size:7.2px;line-height:11.2px;color:#d4d4d4;font-weight:bold;">G</span>
<div style="left:896px;top:115.10000000000001px;width:76.2px;height:3.4px;background:linear-gradient(90deg,#d2202b,#ec7c2e 50%,#f9ed32);"></div>
<svg style="left:963.4px;top:118.10000000000001px;" width="8" height="7" viewBox="0 0 8 7"><path d="M0.6 6.2 V3.6 Q0.8 0.6 4 0.5 Q7.2 0.6 7.4 3.6 V6.2 Z" fill="#cbcbcb"/></svg>
<div style="left:979.4px;top:110.2px;width:24.4px;height:13.2px;background:#454545;border-radius:1px;"></div>
<span style="left:982.3px;top:110.30px;font-size:7.8px;line-height:11.8px;color:#f2f2f2;letter-spacing:-0.704px;-webkit-text-stroke:0.25px #f2f2f2;">237</span>
<span style="left:882.9px;top:136.60px;font-size:7.2px;line-height:11.2px;color:#d4d4d4;font-weight:bold;">B</span>
<div style="left:896px;top:139.8px;width:76.2px;height:3.4px;background:linear-gradient(90deg,#f1e616,#f6ee7c 55%,#ffffff);"></div>
<svg style="left:907px;top:142.8px;" width="8" height="7" viewBox="0 0 8 7"><path d="M0.6 6.2 V3.6 Q0.8 0.6 4 0.5 Q7.2 0.6 7.4 3.6 V6.2 Z" fill="#cbcbcb"/></svg>
<div style="left:979.4px;top:134.9px;width:24.4px;height:13.2px;background:#454545;border-radius:1px;"></div>
<span style="left:982.3px;top:135.00px;font-size:7.8px;line-height:11.8px;color:#f2f2f2;letter-spacing:-0.688px;-webkit-text-stroke:0.25px #f2f2f2;">50</span>
<svg style="left:848px;top:163.8px;" width="28.6" height="9.8" viewBox="0 0 28.6 9.8"><rect width="9.6" height="9.8" fill="#fff"/><path d="M0.4 9.4 L9.2 0.4" stroke="#d2232a" stroke-width="1.6"/><rect x="9.6" width="9.5" height="9.8" fill="#000"/><rect x="19.1" width="9.5" height="9.8" fill="#fff"/></svg>
<span style="left:959.6px;top:163.45px;font-size:7.5px;line-height:11.5px;color:#9a9a9a;">#</span>
<div style="left:966.8px;top:162.4px;width:43.2px;height:13.5px;background:#454545;border-radius:1px;"></div>
<span style="left:971px;top:163.50px;font-size:7.8px;line-height:11.8px;color:#f2f2f2;letter-spacing:-0.342px;-webkit-text-stroke:0.25px #f2f2f2;">f9ed32</span>
<div style="left:848px;top:182.2px;width:162px;height:15.8px;background:linear-gradient(180deg,rgba(255,255,255,1) 0%,rgba(255,255,255,0) 48%,rgba(0,0,0,0) 52%,rgba(0,0,0,1) 100%),linear-gradient(90deg,#ff0000 0%,#ffff00 17%,#00ff00 33%,#00ffff 50%,#0000ff 67%,#ff00ff 83%,#ff0000 100%);"></div>
<div style="left:843.4px;top:202.8px;width:180.60000000000002px;height:2.8px;background:#434343;"></div>
<div style="left:843.4px;top:205.6px;width:180.60000000000002px;height:19.6px;background:#434343;"></div>
<div style="left:843.4px;top:205.6px;width:59.6px;height:20.6px;background:#535353;"></div>
<svg style="left:846px;top:211.4px;" width="6" height="8" viewBox="0 0 6 8"><polyline points="1,3 3,1 5,3" fill="none" stroke="#bdbdbd" stroke-width="1"/><polyline points="1,5 3,7 5,5" fill="none" stroke="#bdbdbd" stroke-width="1"/></svg>
<span style="left:854.8px;top:210.05px;font-size:7.5px;line-height:11.5px;color:#f2f2f2;font-weight:bold;letter-spacing:-0.119px;">Color Guide</span>
<div style="left:1011px;top:212.8px;width:8px;height:1.2px;background:#bcbcbc;"></div>
<div style="left:1011px;top:215.0px;width:8px;height:1.2px;background:#bcbcbc;"></div>
<div style="left:1011px;top:217.2px;width:8px;height:1.2px;background:#bcbcbc;"></div>
<div style="left:847.6px;top:232.2px;width:15px;height:14.8px;background:#f9ed32;border:1px solid #fff;box-shadow:inset 0 0 0 1px #3a3a3a;"></div>
<div style="left:867.9px;top:230.8px;width:150.2px;height:17.6px;background:#4a4a4a;border:1px solid #5e5e5e;"></div>
<div style="left:1005px;top:231.5px;width:1px;height:16.4px;background:#5e5e5e;"></div>
<svg style="left:1006px;top:233px;" width="12" height="12" viewBox="0 0 12 12"><polyline points="3.90,5.10 6.30,7.70 8.70,5.10" fill="none" stroke="#e6e6e6" stroke-width="1.4"/></svg>
<div style="left:869.7px;top:234.2px;width:12.2px;height:11.4px;background:#ffffff;border:1px solid #8a8a8a;"></div>
<div style="left:881.7px;top:234.2px;width:12.499999999999954px;height:11.4px;background:#b8a9a4;"></div>
<div style="left:894px;top:234.2px;width:11.800000000000022px;height:11.4px;background:#b5b1a2;"></div>
<div style="left:905.6px;top:234.2px;width:12.300000000000022px;height:11.4px;background:#bdf2cd;"></div>
<div style="left:917.7px;top:234.2px;width:11.899999999999931px;height:11.4px;background:#9595bf;"></div>
<span style="left:865.7px;top:253.80px;font-size:7.6px;line-height:11.6px;color:#cdcdcd;font-weight:bold;letter-spacing:0.028px;">Shades</span>
<svg style="left:930px;top:256px;" width="6" height="5" viewBox="0 0 6 5"><path d="M0.8 0.8 L5 0.8 L2.9 3.6 Z" fill="#d6d6d6"/></svg>
<span style="left:981.5px;top:253.80px;font-size:7.6px;line-height:11.6px;color:#cdcdcd;font-weight:bold;letter-spacing:0.077px;">Tints</span>
<div style="left:847.5px;top:267px;width:172px;height:110.6px;background:transparent;border:1px solid #5a5a5a;"></div>
<div style="left:848px;top:267.6px;width:171px;height:56px;background:#2f2f2f;"></div>
<div style="left:848.0px;top:267.6px;width:18.2px;height:10.35px;background:#000000;"></div>
<div style="left:867.0px;top:267.6px;width:18.2px;height:10.35px;background:#3c3c3c;"></div>
<div style="left:886.0px;top:267.6px;width:18.2px;height:10.35px;background:#8a8a8a;"></div>
<div style="left:905.0px;top:267.6px;width:18.2px;height:10.35px;background:#c9c9c9;"></div>
<div style="left:924.0px;top:267.6px;width:18.2px;height:10.35px;background:#ffffff;"></div>
<div style="left:943.0px;top:267.6px;width:18.2px;height:10.35px;background:#ffffff;"></div>
<div style="left:962.0px;top:267.6px;width:18.2px;height:10.35px;background:#ffffff;"></div>
<div style="left:981.0px;top:267.6px;width:18.2px;height:10.35px;background:#ffffff;"></div>
<div style="left:1000.0px;top:267.6px;width:18.2px;height:10.35px;background:#ffffff;"></div>
<div style="left:848.0px;top:278.75px;width:18.2px;height:10.35px;background:#000000;"></div>
<div style="left:867.0px;top:278.75px;width:18.2px;height:10.35px;background:#2e2826;"></div>
<div style="left:886.0px;top:278.75px;width:18.2px;height:10.35px;background:#5c5250;"></div>
<div style="left:905.0px;top:278.75px;width:18.2px;height:10.35px;background:#8e807c;"></div>
<div style="left:924.0px;top:278.75px;width:18.2px;height:10.35px;background:#b8a9a4;"></div>
<div style="left:943.0px;top:278.75px;width:18.2px;height:10.35px;background:#c5b8b4;"></div>
<div style="left:962.0px;top:278.75px;width:18.2px;height:10.35px;background:#d3c9c6;"></div>
<div style="left:981.0px;top:278.75px;width:18.2px;height:10.35px;background:#e1dad8;"></div>
<div style="left:1000.0px;top:278.75px;width:18.2px;height:10.35px;background:#f0eceb;"></div>
<div style="left:848.0px;top:289.9px;width:18.2px;height:10.35px;background:#000000;"></div>
<div style="left:867.0px;top:289.9px;width:18.2px;height:10.35px;background:#2c2b27;"></div>
<div style="left:886.0px;top:289.9px;width:18.2px;height:10.35px;background:#5a5851;"></div>
<div style="left:905.0px;top:289.9px;width:18.2px;height:10.35px;background:#8c897d;"></div>
<div style="left:924.0px;top:289.9px;width:18.2px;height:10.35px;background:#b5b1a2;"></div>
<div style="left:943.0px;top:289.9px;width:18.2px;height:10.35px;background:#c3c0b4;"></div>
<div style="left:962.0px;top:289.9px;width:18.2px;height:10.35px;background:#d2cfc6;"></div>
<div style="left:981.0px;top:289.9px;width:18.2px;height:10.35px;background:#e0ded8;"></div>
<div style="left:1000.0px;top:289.9px;width:18.2px;height:10.35px;background:#efeeeb;"></div>
<div style="left:848.0px;top:301.05px;width:18.2px;height:10.35px;background:#000000;"></div>
<div style="left:867.0px;top:301.05px;width:18.2px;height:10.35px;background:#2f3d33;"></div>
<div style="left:886.0px;top:301.05px;width:18.2px;height:10.35px;background:#5e7966;"></div>
<div style="left:905.0px;top:301.05px;width:18.2px;height:10.35px;background:#8fb79b;"></div>
<div style="left:924.0px;top:301.05px;width:18.2px;height:10.35px;background:#bdf2cd;"></div>
<div style="left:943.0px;top:301.05px;width:18.2px;height:10.35px;background:#caf4d7;"></div>
<div style="left:962.0px;top:301.05px;width:18.2px;height:10.35px;background:#d7f7e1;"></div>
<div style="left:981.0px;top:301.05px;width:18.2px;height:10.35px;background:#e4f9eb;"></div>
<div style="left:1000.0px;top:301.05px;width:18.2px;height:10.35px;background:#f1fcf5;"></div>
<div style="left:848.0px;top:312.2px;width:18.2px;height:10.35px;background:#000000;"></div>
<div style="left:867.0px;top:312.2px;width:18.2px;height:10.35px;background:#252530;"></div>
<div style="left:886.0px;top:312.2px;width:18.2px;height:10.35px;background:#4a4a5f;"></div>
<div style="left:905.0px;top:312.2px;width:18.2px;height:10.35px;background:#70708f;"></div>
<div style="left:924.0px;top:312.2px;width:18.2px;height:10.35px;background:#9595bf;"></div>
<div style="left:943.0px;top:312.2px;width:18.2px;height:10.35px;background:#aaaacb;"></div>
<div style="left:962.0px;top:312.2px;width:18.2px;height:10.35px;background:#bfbfd8;"></div>
<div style="left:981.0px;top:312.2px;width:18.2px;height:10.35px;background:#d4d4e5;"></div>
<div style="left:1000.0px;top:312.2px;width:18.2px;height:10.35px;background:#e9e9f2;"></div>
<svg style="left:851px;top:381px;" width="11" height="9" viewBox="0 0 11 9"><path d="M0.6 0.6 H8.6 V7 H0.6 Z M0.6 2.8 H8.6 M0.6 4.9 H8.6 M3.3 0.6 V7 M6 0.6 V7" fill="none" stroke="#c4c4c4" stroke-width="0.9"/><rect x="9.4" y="6.2" width="1.2" height="1.2" fill="#c4c4c4"/></svg>
<span style="left:870.9px;top:380.40px;font-size:7.2px;line-height:11.2px;color:#c9c9c9;font-weight:bold;letter-spacing:-0.150px;">None</span>
<svg style="left:973px;top:380px;" width="12" height="12" viewBox="0 0 12 12"><circle cx="6" cy="5.8" r="5" fill="#d2d2d2"/><circle cx="6" cy="5.8" r="2.6" fill="none" stroke="#8a8a8a" stroke-width="0.8"/><path d="M6 0.8 V10.8 M1 5.8 H11" stroke="#9a9a9a" stroke-width="0.6"/></svg>
<svg style="left:992px;top:380px;" width="14" height="11" viewBox="0 0 14 11"><rect x="5.4" y="1.4" width="7.6" height="6.6" fill="none" stroke="#c4c4c4" stroke-width="1"/><path d="M8 1.4 V8 M10.5 1.4 V8" stroke="#c4c4c4" stroke-width="0.8"/><path d="M2.6 4 V9.4 M0.6 7.2 L2.6 9.6 L4.6 7.2" fill="none" stroke="#c4c4c4" stroke-width="1.1"/></svg>
<div style="left:843.4px;top:391.8px;width:180.60000000000002px;height:3px;background:#434343;"></div>
<div style="left:843.4px;top:394.8px;width:180.60000000000002px;height:19.6px;background:#434343;"></div>
<div style="left:843.4px;top:394.8px;width:47px;height:20.6px;background:#535353;"></div>
<div style="left:890.4px;top:394.8px;width:42px;height:19.2px;background:#454545;border-right:1px solid #4d4d4d;"></div>
<span style="left:850.4px;top:399.15px;font-size:7.5px;line-height:11.5px;color:#f2f2f2;font-weight:bold;letter-spacing:-0.250px;">Swatches</span>
<span style="left:895.6px;top:399.15px;font-size:7.5px;line-height:11.5px;color:#a8a8a8;font-weight:bold;letter-spacing:-0.209px;">Libraries</span>
<div style="left:1011px;top:401.59999999999997px;width:8px;height:1.2px;background:#bcbcbc;"></div>
<div style="left:1011px;top:403.79999999999995px;width:8px;height:1.2px;background:#bcbcbc;"></div>
<div style="left:1011px;top:405.99999999999994px;width:8px;height:1.2px;background:#bcbcbc;"></div>
<svg style="left:854.6px;top:427px;" width="14.6" height="14.4" viewBox="0 0 14.6 14.4"><rect width="14.6" height="14.4" fill="#fff"/><rect x="4.2" y="4.2" width="6.2" height="6" fill="#535353"/><path d="M0.6 13.8 L14 0.6" stroke="#d2232a" stroke-width="1.6"/><rect x="5.3" y="5.2" width="4" height="4" fill="#b32b2b"/></svg>
<div style="left:848px;top:419.7px;width:13.6px;height:12.9px;background:#f9ed32;border:1px solid #e0cf60;"></div>
<div style="left:987px;top:423.4px;width:9.4px;height:1.3px;background:#d0d0d0;"></div>
<div style="left:987px;top:426.09999999999997px;width:9.4px;height:1.3px;background:#d0d0d0;"></div>
<div style="left:987px;top:428.79999999999995px;width:9.4px;height:1.3px;background:#d0d0d0;"></div>
<div style="left:987px;top:431.5px;width:9.4px;height:1.3px;background:#d0d0d0;"></div>
<div style="left:1001.5px;top:419.7px;width:17.4px;height:16.1px;background:#333;border-radius:1px;"></div>
<div style="left:1004.6px;top:422.6px;width:3px;height:2.8px;background:#d8d8d8;"></div>
<div style="left:1004.6px;top:426.40000000000003px;width:3px;height:2.8px;background:#d8d8d8;"></div>
<div style="left:1004.6px;top:430.20000000000005px;width:3px;height:2.8px;background:#d8d8d8;"></div>
<div style="left:1008.6px;top:422.6px;width:3px;height:2.8px;background:#d8d8d8;"></div>
<div style="left:1008.6px;top:426.40000000000003px;width:3px;height:2.8px;background:#d8d8d8;"></div>
<div style="left:1008.6px;top:430.20000000000005px;width:3px;height:2.8px;background:#d8d8d8;"></div>
<div style="left:1012.6px;top:422.6px;width:3px;height:2.8px;background:#d8d8d8;"></div>
<div style="left:1012.6px;top:426.40000000000003px;width:3px;height:2.8px;background:#d8d8d8;"></div>
<div style="left:1012.6px;top:430.20000000000005px;width:3px;height:2.8px;background:#d8d8d8;"></div>
<svg style="left:847.9px;top:445.8px;" width="10.5" height="9.9" viewBox="0 0 10.5 9.9"><rect width="10.5" height="9.9" fill="#fff"/><path d="M0.4 9.5 L10.1 0.4" stroke="#d2232a" stroke-width="1.5"/></svg>
<svg style="left:858.36px;top:445.8px;" width="10.5" height="9.9" viewBox="0 0 10.5 9.9"><rect width="10.5" height="9.9" fill="#e8e8e8"/><circle cx="4.8" cy="4.75" r="2.6" fill="none" stroke="#555" stroke-width="0.8"/><path d="M4.8 0.6 V8.9 M0.6 4.75 H9" stroke="#555" stroke-width="0.7"/><path d="M0 0 h2.4 v2.4 h-2.4z M7.2 0 h2.4 v2.4 h-2.4z M0 7.1 h2.4 v2.4 h-2.4z M7.2 7.1 h2.4 v2.4 h-2.4z" fill="#9cc" opacity="0.7"/></svg>
<div style="left:868.82px;top:445.8px;width:10.510000000000002px;height:9.9px;background:#ffffff;"></div>
<div style="left:879.28px;top:445.8px;width:10.510000000000002px;height:9.9px;background:#1a1a1a;"></div>
<div style="left:889.74px;top:445.8px;width:10.510000000000002px;height:9.9px;background:#ed1c24;"></div>
<div style="left:900.2px;top:445.8px;width:10.510000000000002px;height:9.9px;background:#fff200;"></div>
<div style="left:910.66px;top:445.8px;width:10.510000000000002px;height:9.9px;background:#00a651;"></div>
<div style="left:921.12px;top:445.8px;width:10.510000000000002px;height:9.9px;background:#00aeef;"></div>
<div style="left:931.58px;top:445.8px;width:10.510000000000002px;height:9.9px;background:#2e3192;"></div>
<div style="left:942.04px;top:445.8px;width:10.510000000000002px;height:9.9px;background:#ec008c;"></div>
<div style="left:952.5px;top:445.8px;width:10.510000000000002px;height:9.9px;background:#c1272d;"></div>
<div style="left:962.96px;top:445.8px;width:10.510000000000002px;height:9.9px;background:#ef4136;"></div>
<div style="left:973.42px;top:445.8px;width:10.510000000000002px;height:9.9px;background:#f15a29;"></div>
<div style="left:983.88px;top:445.8px;width:10.510000000000002px;height:9.9px;background:#f7941d;"></div>
<div style="left:994.34px;top:445.8px;width:10.510000000000002px;height:9.9px;background:#fbb040;"></div>
<div style="left:847.9px;top:456.4px;width:10.510000000000002px;height:9.9px;background:#f9ed32;"></div>
<div style="left:858.36px;top:456.4px;width:10.510000000000002px;height:9.9px;background:#d7df23;"></div>
<div style="left:868.82px;top:456.4px;width:10.510000000000002px;height:9.9px;background:#8dc63f;"></div>
<div style="left:879.28px;top:456.4px;width:10.510000000000002px;height:9.9px;background:#39b54a;"></div>
<div style="left:889.74px;top:456.4px;width:10.510000000000002px;height:9.9px;background:#009444;"></div>
<div style="left:900.2px;top:456.4px;width:10.510000000000002px;height:9.9px;background:#006838;"></div>
<div style="left:910.66px;top:456.4px;width:10.510000000000002px;height:9.9px;background:#2bb673;"></div>
<div style="left:921.12px;top:456.4px;width:10.510000000000002px;height:9.9px;background:#00a79d;"></div>
<div style="left:931.58px;top:456.4px;width:10.510000000000002px;height:9.9px;background:#27aae1;"></div>
<div style="left:942.04px;top:456.4px;width:10.510000000000002px;height:9.9px;background:#1c75bc;"></div>
<div style="left:952.5px;top:456.4px;width:10.510000000000002px;height:9.9px;background:#2b3990;"></div>
<div style="left:962.96px;top:456.4px;width:10.510000000000002px;height:9.9px;background:#262262;"></div>
<div style="left:973.42px;top:456.4px;width:10.510000000000002px;height:9.9px;background:#662d91;"></div>
<div style="left:983.88px;top:456.4px;width:10.510000000000002px;height:9.9px;background:#92278f;"></div>
<div style="left:994.34px;top:456.4px;width:10.510000000000002px;height:9.9px;background:#9e1f63;"></div>
<div style="left:847.9px;top:467.0px;width:10.510000000000002px;height:9.9px;background:#da1c5c;"></div>
<div style="left:858.36px;top:467.0px;width:10.510000000000002px;height:9.9px;background:#ee2a7b;"></div>
<div style="left:868.82px;top:467.0px;width:10.510000000000002px;height:9.9px;background:#c2b59b;"></div>
<div style="left:879.28px;top:467.0px;width:10.510000000000002px;height:9.9px;background:#9b8579;"></div>
<div style="left:889.74px;top:467.0px;width:10.510000000000002px;height:9.9px;background:#726658;"></div>
<div style="left:900.2px;top:467.0px;width:10.510000000000002px;height:9.9px;background:#594a42;"></div>
<div style="left:910.66px;top:467.0px;width:10.510000000000002px;height:9.9px;background:#c49a6c;"></div>
<div style="left:921.12px;top:467.0px;width:10.510000000000002px;height:9.9px;background:#a97c50;"></div>
<div style="left:931.58px;top:467.0px;width:10.510000000000002px;height:9.9px;background:#8b5e3c;"></div>
<div style="left:942.04px;top:467.0px;width:10.510000000000002px;height:9.9px;background:#754c29;"></div>
<div style="left:952.5px;top:467.0px;width:10.510000000000002px;height:9.9px;background:#603913;"></div>
<div style="left:962.96px;top:467.0px;width:10.510000000000002px;height:9.9px;background:#3c2415;"></div>
<div style="left:973.42px;top:467.0px;width:10.510000000000002px;height:9.9px;background:linear-gradient(90deg,#fff,#000);"></div>
<div style="left:983.88px;top:467.0px;width:10.510000000000002px;height:9.9px;background:linear-gradient(90deg,#fff200 10%,#f7941d 90%);"></div>
<div style="left:994.34px;top:467.0px;width:10.510000000000002px;height:9.9px;background:linear-gradient(90deg,#1c75bc,#fff);"></div>
<div style="left:847.9px;top:477.6px;width:10.510000000000002px;height:6.4px;background:radial-gradient(circle at 50% 100%,#fff 30%,#000 32%);"></div>
<div style="left:858.36px;top:477.6px;width:10.510000000000002px;height:6.4px;background:linear-gradient(180deg,#7ac143 50%,#c9e0a0 50%);"></div>
<div style="left:868.82px;top:477.6px;width:10.510000000000002px;height:6.4px;background:linear-gradient(135deg,#8c6d3f,#e6d5a8,#8c6d3f);"></div>
<div style="left:879.28px;top:477.6px;width:10.510000000000002px;height:6.4px;background:linear-gradient(90deg,#5b2d86,#e9d7ef);"></div>
<div style="left:889.74px;top:477.6px;width:10.510000000000002px;height:6.4px;background:linear-gradient(90deg,#f7941d,#7a2e12);"></div>
<div style="left:900.2px;top:477.6px;width:10.510000000000002px;height:6.4px;background:linear-gradient(90deg,#8d2f39,#f4a0a8,#8d2f39);"></div>
<div style="left:1008.6px;top:444px;width:11px;height:42px;background:#4e4e4e;"></div>
<svg style="left:1009px;top:446px;" width="10" height="8" viewBox="0 0 10 8"><polyline points="2.4,5.2 5,2.6 7.6,5.2" fill="none" stroke="#9a9a9a" stroke-width="1.2"/></svg>
<svg style="left:1009px;top:474.5px;" width="10" height="8" viewBox="0 0 10 8"><polyline points="2.4,2.8 5,5.4 7.6,2.8" fill="none" stroke="#9a9a9a" stroke-width="1.2"/></svg>
<svg style="left:850.2px;top:486.2px;overflow:visible;" width="12" height="12" viewBox="0 0 12 12"><g transform="translate(6 6) scale(0.86) translate(-6 -6)"><path d="M1.4 1.6 V10.4 M3.8 1.6 V10.4 M6 2.4 L8.6 10.2" stroke="#c6c6c6" stroke-width="1.3" fill="none"/><rect x="10" y="9.4" width="1.3" height="1.3" fill="#c6c6c6"/></g></svg>
<svg style="left:870px;top:486.2px;overflow:visible;" width="12" height="12" viewBox="0 0 12 12"><g transform="translate(6 6) scale(0.86) translate(-6 -6)"><circle cx="3.4" cy="6" r="2" fill="none" stroke="#c6c6c6" stroke-width="1"/><path d="M5 5 L9 2 M5 7 L9 10 M9 2 L9 10" stroke="#c6c6c6" stroke-width="1" fill="none"/><circle cx="9" cy="2.4" r="1.2" fill="#c6c6c6"/><circle cx="9" cy="9.6" r="1.2" fill="#c6c6c6"/></g></svg>
<svg style="left:890.3px;top:486.2px;overflow:visible;" width="12" height="12" viewBox="0 0 12 12"><g transform="translate(6 6) scale(0.86) translate(-6 -6)"><path d="M2 9.6 Q-0.6 9.6 0.4 7 Q1 5.4 3 5.8 Q3.6 2.6 6.6 3 Q9 3.4 9.2 6 Q12 6 11.6 8.2 Q11.4 9.6 9.6 9.6 Z" fill="#6c6c6c"/></g></svg>
<svg style="left:913.4px;top:486.2px;overflow:visible;" width="12" height="12" viewBox="0 0 12 12"><g transform="translate(6 6) scale(0.86) translate(-6 -6)"><rect x="1" y="1.4" width="8.4" height="8.4" fill="none" stroke="#c6c6c6" stroke-width="1"/><path d="M1 4.2 H9.4 M1 7 H9.4 M3.8 1.4 V9.8 M6.6 1.4 V9.8" stroke="#c6c6c6" stroke-width="0.8"/><rect x="5" y="5.4" width="4" height="4" fill="#c6c6c6"/><rect x="10.6" y="9" width="1.3" height="1.3" fill="#c6c6c6"/></g></svg>
<svg style="left:933.6px;top:486.2px;overflow:visible;" width="12" height="12" viewBox="0 0 12 12"><g transform="translate(6 6) scale(0.86) translate(-6 -6)"><rect x="1.4" y="1.6" width="8.8" height="8.8" fill="none" stroke="#6c6c6c" stroke-width="1"/><path d="M3.6 4.4 H8 M3.6 6.6 H8 M3.6 8.6 H8" stroke="#6c6c6c" stroke-width="0.8"/></g></svg>
<svg style="left:952.9px;top:486.2px;overflow:visible;" width="12" height="12" viewBox="0 0 12 12"><g transform="translate(6 6) scale(0.86) translate(-6 -6)"><path d="M0.8 3 H4.4 L5.6 4.4 H11.2 V10.4 H0.8 Z" fill="#c6c6c6"/></g></svg>
<svg style="left:973px;top:486.2px;overflow:visible;" width="12" height="12" viewBox="0 0 12 12"><g transform="translate(6 6) scale(0.86) translate(-6 -6)"><path d="M1.6 1.4 H10.4 V7 L7 10.6 H1.6 Z" fill="#c6c6c6"/><path d="M7 10.6 V7 H10.4" fill="#535353" stroke="#c6c6c6" stroke-width="0.8"/></g></svg>
<svg style="left:992.3px;top:486.2px;overflow:visible;" width="12" height="12" viewBox="0 0 12 12"><g transform="translate(6 6) scale(0.86) translate(-6 -6)"><path d="M2.4 3.6 H9.6 L9 10.8 H3 Z" fill="none" stroke="#6c6c6c" stroke-width="1"/><path d="M1.4 3.4 H10.6 M4.6 2 H7.4 M4.8 5.4 V9 M7.2 5.4 V9" stroke="#6c6c6c" stroke-width="0.9"/></g></svg>
<div style="left:843.4px;top:499.6px;width:180.60000000000002px;height:2px;background:#434343;"></div>
<div style="left:843.4px;top:501.6px;width:180.60000000000002px;height:18.6px;background:#434343;"></div>
<div style="left:843.4px;top:501.6px;width:40.6px;height:19.6px;background:#535353;"></div>
<div style="left:884px;top:501.6px;width:36.6px;height:18.4px;background:#454545;border-right:1px solid #4d4d4d;"></div>
<div style="left:920.6px;top:501.6px;width:41.4px;height:18.4px;background:#454545;border-right:1px solid #4d4d4d;"></div>
<span style="left:850.4px;top:506.05px;font-size:7.5px;line-height:11.5px;color:#f2f2f2;font-weight:bold;letter-spacing:-0.516px;">Brushes</span>
<span style="left:889.9px;top:506.05px;font-size:7.5px;line-height:11.5px;color:#a8a8a8;font-weight:bold;letter-spacing:-0.024px;">Stroke</span>
<span style="left:927.4px;top:506.05px;font-size:7.5px;line-height:11.5px;color:#a8a8a8;font-weight:bold;letter-spacing:-0.266px;">Symbols</span>
<div style="left:1011px;top:508.59999999999997px;width:8px;height:1.2px;background:#bcbcbc;"></div>
<div style="left:1011px;top:510.79999999999995px;width:8px;height:1.2px;background:#bcbcbc;"></div>
<div style="left:1011px;top:513.0px;width:8px;height:1.2px;background:#bcbcbc;"></div>
<div style="left:843.4px;top:520.4px;width:180.60000000000002px;height:2.8px;background:#4b4b4b;"></div>
<div style="left:843.4px;top:523.4px;width:180.60000000000002px;height:22px;background:#434343;"></div>
<div style="left:843.4px;top:523.4px;width:35px;height:23px;background:#535353;"></div>
<span style="left:850.4px;top:529.15px;font-size:7.5px;line-height:11.5px;color:#f2f2f2;font-weight:bold;letter-spacing:-0.530px;">Layers</span>
<div style="left:1011px;top:531.5999999999999px;width:8px;height:1.2px;background:#bcbcbc;"></div>
<div style="left:1011px;top:533.8px;width:8px;height:1.2px;background:#bcbcbc;"></div>
<div style="left:1011px;top:536.0px;width:8px;height:1.2px;background:#bcbcbc;"></div>
<span style="left:62px;top:54.80px;font-size:8.6px;line-height:12.6px;color:#f4f4f4;font-weight:bold;letter-spacing:-0.242px;">Solar Eclipse.ai* @ 101% (RGB/Preview)</span>
<svg style="left:799.2px;top:71.6px;" width="12" height="10" viewBox="0 0 12 10"><polyline points="3,6.4 6,3.6 9,6.4" fill="none" stroke="#a8a8a8" stroke-width="1.2"/></svg>
<div style="left:800px;top:290px;width:10.6px;height:22.4px;background:#666;border-radius:5.3px;"></div>
<svg style="left:799.2px;top:521.8px;" width="12" height="10" viewBox="0 0 12 10"><polyline points="3,3.6 6,6.4 9,3.6" fill="none" stroke="#a8a8a8" stroke-width="1.2"/></svg>
<div style="left:59px;top:534px;width:37px;height:11px;background:#474747;"></div>
<span style="left:61.4px;top:535.10px;font-size:7.6px;line-height:11.6px;color:#f0f0f0;font-weight:bold;letter-spacing:-0.309px;">101%</span>
<div style="left:97px;top:534px;width:12.4px;height:11px;background:#4c4c4c;"></div>
<svg style="left:97px;top:534px;" width="12" height="12" viewBox="0 0 12 12"><polyline points="4.00,5.30 6.40,7.90 8.80,5.30" fill="none" stroke="#e6e6e6" stroke-width="1.4"/></svg>
<svg style="left:113px;top:535.8px;" width="26" height="10" viewBox="0 0 26 10"><rect x="3.6" y="1.6" width="1.2" height="6.8" fill="#6e6e6e"/><path d="M9.2 1.6 L5.4 5 L9.2 8.4 Z" fill="#6e6e6e"/><path d="M21.4 1.6 L17.6 5 L21.4 8.4 Z" fill="#6e6e6e"/></svg>
<div style="left:141px;top:534px;width:29px;height:11px;background:#474747;"></div>
<span style="left:143.6px;top:535.10px;font-size:7.6px;line-height:11.6px;color:#f0f0f0;font-weight:bold;">1</span>
<div style="left:171px;top:534px;width:12.4px;height:11px;background:#4c4c4c;"></div>
<svg style="left:171px;top:534px;" width="12" height="12" viewBox="0 0 12 12"><polyline points="4.00,5.30 6.40,7.90 8.80,5.30" fill="none" stroke="#e6e6e6" stroke-width="1.4"/></svg>
<svg style="left:187px;top:535.8px;" width="26" height="10" viewBox="0 0 26 10"><path d="M4 1.6 L7.8 5 L4 8.4 Z" fill="#6e6e6e"/><path d="M15.6 1.6 L19.4 5 L15.6 8.4 Z" fill="#6e6e6e"/><rect x="20.2" y="1.6" width="1.2" height="6.8" fill="#6e6e6e"/></svg>
<div style="left:217px;top:534px;width:1px;height:11px;background:#484848;"></div>
<span style="left:275.4px;top:535.10px;font-size:7.6px;line-height:11.6px;color:#e0e0e0;letter-spacing:-0.051px;-webkit-text-stroke:0.2px #e0e0e0;">Selection</span>
<div style="left:364px;top:534px;width:1px;height:11px;background:#484848;"></div>
<svg style="left:369px;top:535.8px;" width="8" height="10" viewBox="0 0 8 10"><path d="M1.4 1.2 L5.8 5 L1.4 8.8 Z" fill="#e0e0e0"/></svg>
<div style="left:380px;top:533.2px;width:431px;height:11.8px;background:#4c4c4c;"></div>
<svg style="left:381px;top:535.6px;" width="8" height="10" viewBox="0 0 8 10"><polyline points="5.4,2.2 2.8,5 5.4,7.8" fill="none" stroke="#a8a8a8" stroke-width="1.2"/></svg>
<div style="left:579px;top:534.2px;width:19.8px;height:10.6px;background:#666;border-radius:5.3px;"></div>
<svg style="left:788px;top:535.6px;" width="8" height="10" viewBox="0 0 8 10"><polyline points="2.6,2.2 5.2,5 2.6,7.8" fill="none" stroke="#a8a8a8" stroke-width="1.2"/></svg>
<svg style="left:0px;top:0px;" width="1024" height="545" viewBox="0 0 1024 545">
<defs>
<radialGradient id="rg" cx="421.5" cy="302.5" r="145.5" gradientUnits="userSpaceOnUse">
<stop offset="0.68" stop-color="#fbee35"/>
<stop offset="0.74" stop-color="#f5de30"/>
<stop offset="0.79" stop-color="#eeb22c"/>
<stop offset="0.85" stop-color="#de8b27"/>
<stop offset="0.92" stop-color="#c96720"/>
<stop offset="1" stop-color="#a53c1f"/>
</radialGradient>
</defs>
<circle cx="421.5" cy="302.5" r="145.2" fill="url(#rg)" stroke="#9a96e0" stroke-width="0.9"/>
<circle cx="422" cy="299" r="107.5" fill="#e6352b"/>
<circle cx="429.5" cy="303.5" r="107.5" fill="#000"/>
<rect x="276.5" y="157.5" width="290.5" height="291" fill="none" stroke="#6f7fe6" stroke-width="0.9"/>
<rect x="565" y="155.5" width="4" height="4" fill="#fff" stroke="#6f7fe6" stroke-width="0.7"/><rect x="565" y="301" width="4" height="4" fill="#fff" stroke="#6f7fe6" stroke-width="0.7"/><rect x="565" y="446.5" width="4" height="4" fill="#fff" stroke="#6f7fe6" stroke-width="0.7"/><rect x="419.5" y="446.5" width="4" height="4" fill="#fff" stroke="#6f7fe6" stroke-width="0.7"/><rect x="274.5" y="446.5" width="4" height="4" fill="#fff" stroke="#6f7fe6" stroke-width="0.7"/><rect x="274.5" y="155.5" width="4" height="4" fill="#fff" stroke="#6f7fe6" stroke-width="0.7"/><rect x="419.5" y="155.5" width="4" height="4" fill="#fff" stroke="#6f7fe6" stroke-width="0.7"/><rect x="274.5" y="301" width="4" height="4" fill="#fff" stroke="#6f7fe6" stroke-width="0.7"/>
<circle cx="421.3" cy="303" r="2" fill="#6f7fe6"/>
<path d="M569.5 303.3 H577" stroke="#8f9bc8" stroke-width="0.8"/>
<circle cx="579.5" cy="303.4" r="2.2" fill="#1a1a2a" stroke="#dfe6ff" stroke-width="1.3"/>
</svg>
<div style="left:192px;top:18px;width:173px;height:335.5px;background:#f0f0f0;border:1px solid #a0a0a0;"></div>
<span style="left:208px;top:21.10px;font-size:8.8px;line-height:12.8px;color:#9d9d9d;letter-spacing:0.008px;">Apply Last Effect</span>
<span style="left:298px;top:21.10px;font-size:8.8px;line-height:12.8px;color:#9d9d9d;letter-spacing:0.046px;">Shift+Ctrl+E</span>
<span style="left:208px;top:35.30px;font-size:8.8px;line-height:12.8px;color:#9d9d9d;letter-spacing:-0.038px;">Last Effect</span>
<span style="left:280px;top:35.30px;font-size:8.8px;line-height:12.8px;color:#9d9d9d;letter-spacing:0.197px;">Alt+Shift+Ctrl+E</span>
<div style="left:194.5px;top:51px;width:167px;height:1px;background:#a9a9a9;"></div>
<span style="left:208px;top:56.30px;font-size:8.8px;line-height:12.8px;color:#1a1a1a;letter-spacing:-0.075px;">Document Raster Effects Settings...</span>
<div style="left:194.5px;top:72px;width:167px;height:1px;background:#a9a9a9;"></div>
<span style="left:208px;top:77.30px;font-size:8.8px;line-height:12.8px;color:#9d9d9d;letter-spacing:-0.019px;">Illustrator Effects</span>
<div style="left:194px;top:126px;width:168px;height:12.5px;background:#3399ff;"></div>
<span style="left:215.7px;top:90.60px;font-size:8.8px;line-height:12.8px;color:#1a1a1a;letter-spacing:-0.674px;">3D</span>
<svg style="left:354px;top:92.3px;" width="5" height="8" viewBox="0 0 5 8"><path d="M0.3 1 L3.8 4 L0.3 7 Z" fill="#111"/></svg>
<span style="left:215.7px;top:102.60px;font-size:8.8px;line-height:12.8px;color:#1a1a1a;letter-spacing:-0.049px;">Convert to Shape</span>
<svg style="left:354px;top:104.3px;" width="5" height="8" viewBox="0 0 5 8"><path d="M0.3 1 L3.8 4 L0.3 7 Z" fill="#111"/></svg>
<span style="left:215.7px;top:114.60px;font-size:8.8px;line-height:12.8px;color:#1a1a1a;letter-spacing:-0.027px;">Crop Marks</span>
<span style="left:215.7px;top:126.60px;font-size:8.8px;line-height:12.8px;color:#fff;letter-spacing:0.153px;">Distort &amp; Transform</span>
<svg style="left:354px;top:128.3px;" width="5" height="8" viewBox="0 0 5 8"><path d="M0.3 1 L3.8 4 L0.3 7 Z" fill="#fff"/></svg>
<span style="left:215.7px;top:138.60px;font-size:8.8px;line-height:12.8px;color:#1a1a1a;letter-spacing:-0.100px;">Path</span>
<svg style="left:354px;top:140.3px;" width="5" height="8" viewBox="0 0 5 8"><path d="M0.3 1 L3.8 4 L0.3 7 Z" fill="#111"/></svg>
<span style="left:215.7px;top:150.60px;font-size:8.8px;line-height:12.8px;color:#1a1a1a;letter-spacing:0.119px;">Pathfinder</span>
<svg style="left:354px;top:152.3px;" width="5" height="8" viewBox="0 0 5 8"><path d="M0.3 1 L3.8 4 L0.3 7 Z" fill="#111"/></svg>
<span style="left:215.7px;top:162.60px;font-size:8.8px;line-height:12.8px;color:#1a1a1a;letter-spacing:-0.308px;">Rasterize...</span>
<span style="left:215.7px;top:174.60px;font-size:8.8px;line-height:12.8px;color:#1a1a1a;letter-spacing:-0.231px;">Stylize</span>
<svg style="left:354px;top:176.3px;" width="5" height="8" viewBox="0 0 5 8"><path d="M0.3 1 L3.8 4 L0.3 7 Z" fill="#111"/></svg>
<span style="left:215.7px;top:186.60px;font-size:8.8px;line-height:12.8px;color:#1a1a1a;letter-spacing:-0.380px;">SVG Filters</span>
<svg style="left:354px;top:188.3px;" width="5" height="8" viewBox="0 0 5 8"><path d="M0.3 1 L3.8 4 L0.3 7 Z" fill="#111"/></svg>
<span style="left:215.7px;top:198.60px;font-size:8.8px;line-height:12.8px;color:#1a1a1a;letter-spacing:-0.599px;">Warp</span>
<svg style="left:354px;top:200.3px;" width="5" height="8" viewBox="0 0 5 8"><path d="M0.3 1 L3.8 4 L0.3 7 Z" fill="#111"/></svg>
<div style="left:194.5px;top:213px;width:167px;height:1px;background:#a9a9a9;"></div>
<span style="left:208px;top:218.80px;font-size:8.8px;line-height:12.8px;color:#9d9d9d;letter-spacing:0.044px;">Photoshop Effects</span>
<span style="left:215.7px;top:231.30px;font-size:8.8px;line-height:12.8px;color:#1a1a1a;letter-spacing:-0.090px;">Effect Gallery...</span>
<span style="left:215.7px;top:243.30px;font-size:8.8px;line-height:12.8px;color:#1a1a1a;letter-spacing:0.075px;">Artistic</span>
<svg style="left:354px;top:245px;" width="5" height="8" viewBox="0 0 5 8"><path d="M0.3 1 L3.8 4 L0.3 7 Z" fill="#111"/></svg>
<span style="left:215.7px;top:255.30px;font-size:8.8px;line-height:12.8px;color:#1a1a1a;letter-spacing:-0.187px;">Blur</span>
<svg style="left:354px;top:257px;" width="5" height="8" viewBox="0 0 5 8"><path d="M0.3 1 L3.8 4 L0.3 7 Z" fill="#111"/></svg>
<span style="left:215.7px;top:267.30px;font-size:8.8px;line-height:12.8px;color:#1a1a1a;letter-spacing:-0.228px;">Brush Strokes</span>
<svg style="left:354px;top:269px;" width="5" height="8" viewBox="0 0 5 8"><path d="M0.3 1 L3.8 4 L0.3 7 Z" fill="#111"/></svg>
<span style="left:215.7px;top:279.30px;font-size:8.8px;line-height:12.8px;color:#1a1a1a;letter-spacing:-0.018px;">Distort</span>
<svg style="left:354px;top:281px;" width="5" height="8" viewBox="0 0 5 8"><path d="M0.3 1 L3.8 4 L0.3 7 Z" fill="#111"/></svg>
<span style="left:215.7px;top:291.30px;font-size:8.8px;line-height:12.8px;color:#1a1a1a;letter-spacing:-0.188px;">Pixelate</span>
<svg style="left:354px;top:293px;" width="5" height="8" viewBox="0 0 5 8"><path d="M0.3 1 L3.8 4 L0.3 7 Z" fill="#111"/></svg>
<span style="left:215.7px;top:303.30px;font-size:8.8px;line-height:12.8px;color:#1a1a1a;letter-spacing:-0.350px;">Sketch</span>
<svg style="left:354px;top:305px;" width="5" height="8" viewBox="0 0 5 8"><path d="M0.3 1 L3.8 4 L0.3 7 Z" fill="#111"/></svg>
<span style="left:215.7px;top:315.30px;font-size:8.8px;line-height:12.8px;color:#1a1a1a;letter-spacing:-0.231px;">Stylize</span>
<svg style="left:354px;top:317px;" width="5" height="8" viewBox="0 0 5 8"><path d="M0.3 1 L3.8 4 L0.3 7 Z" fill="#111"/></svg>
<span style="left:215.7px;top:327.30px;font-size:8.8px;line-height:12.8px;color:#1a1a1a;letter-spacing:-0.022px;">Texture</span>
<svg style="left:354px;top:329px;" width="5" height="8" viewBox="0 0 5 8"><path d="M0.3 1 L3.8 4 L0.3 7 Z" fill="#111"/></svg>
<span style="left:215.7px;top:339.30px;font-size:8.8px;line-height:12.8px;color:#1a1a1a;letter-spacing:-0.169px;">Video</span>
<svg style="left:354px;top:341px;" width="5" height="8" viewBox="0 0 5 8"><path d="M0.3 1 L3.8 4 L0.3 7 Z" fill="#111"/></svg>
<div style="left:361px;top:124px;width:133px;height:120px;background:#f0f0f0;border:1px solid #a0a0a0;"></div>
<div style="left:383.5px;top:126px;width:1px;height:116px;background:#e2e2e2;"></div>
<div style="left:363px;top:160px;width:129px;height:15.5px;background:#d3e5f6;border:1px solid #9cbfe8;"></div>
<span style="left:387px;top:128.50px;font-size:9.2px;line-height:13.2px;color:#1a1a1a;letter-spacing:-0.274px;">Free Distort...</span>
<span style="left:387px;top:145.10px;font-size:9.2px;line-height:13.2px;color:#1a1a1a;letter-spacing:-0.160px;">Pucker &amp; Bloat...</span>
<span style="left:387px;top:161.20px;font-size:9.2px;line-height:13.2px;color:#1a1a1a;letter-spacing:-0.221px;">Roughen...</span>
<span style="left:387px;top:178.00px;font-size:9.2px;line-height:13.2px;color:#1a1a1a;letter-spacing:-0.170px;">Transform...</span>
<span style="left:387px;top:194.30px;font-size:9.2px;line-height:13.2px;color:#1a1a1a;letter-spacing:-0.307px;">Tweak...</span>
<span style="left:387px;top:210.60px;font-size:9.2px;line-height:13.2px;color:#1a1a1a;letter-spacing:-0.178px;">Twist...</span>
<span style="left:387px;top:227.40px;font-size:9.2px;line-height:13.2px;color:#1a1a1a;letter-spacing:-0.265px;">Zig Zag...</span>
<svg style="left:430px;top:150px;" width="64" height="40" viewBox="0 0 64 40"><path d="M9 20.2 L30.5 9 L30.5 14.5 L54.5 14.5 L54.5 26 L30.5 26 L30.5 31.5 Z" fill="none" stroke="#0a0a0a" stroke-width="3.1" stroke-linejoin="miter"/></svg>
</div></body></html>
